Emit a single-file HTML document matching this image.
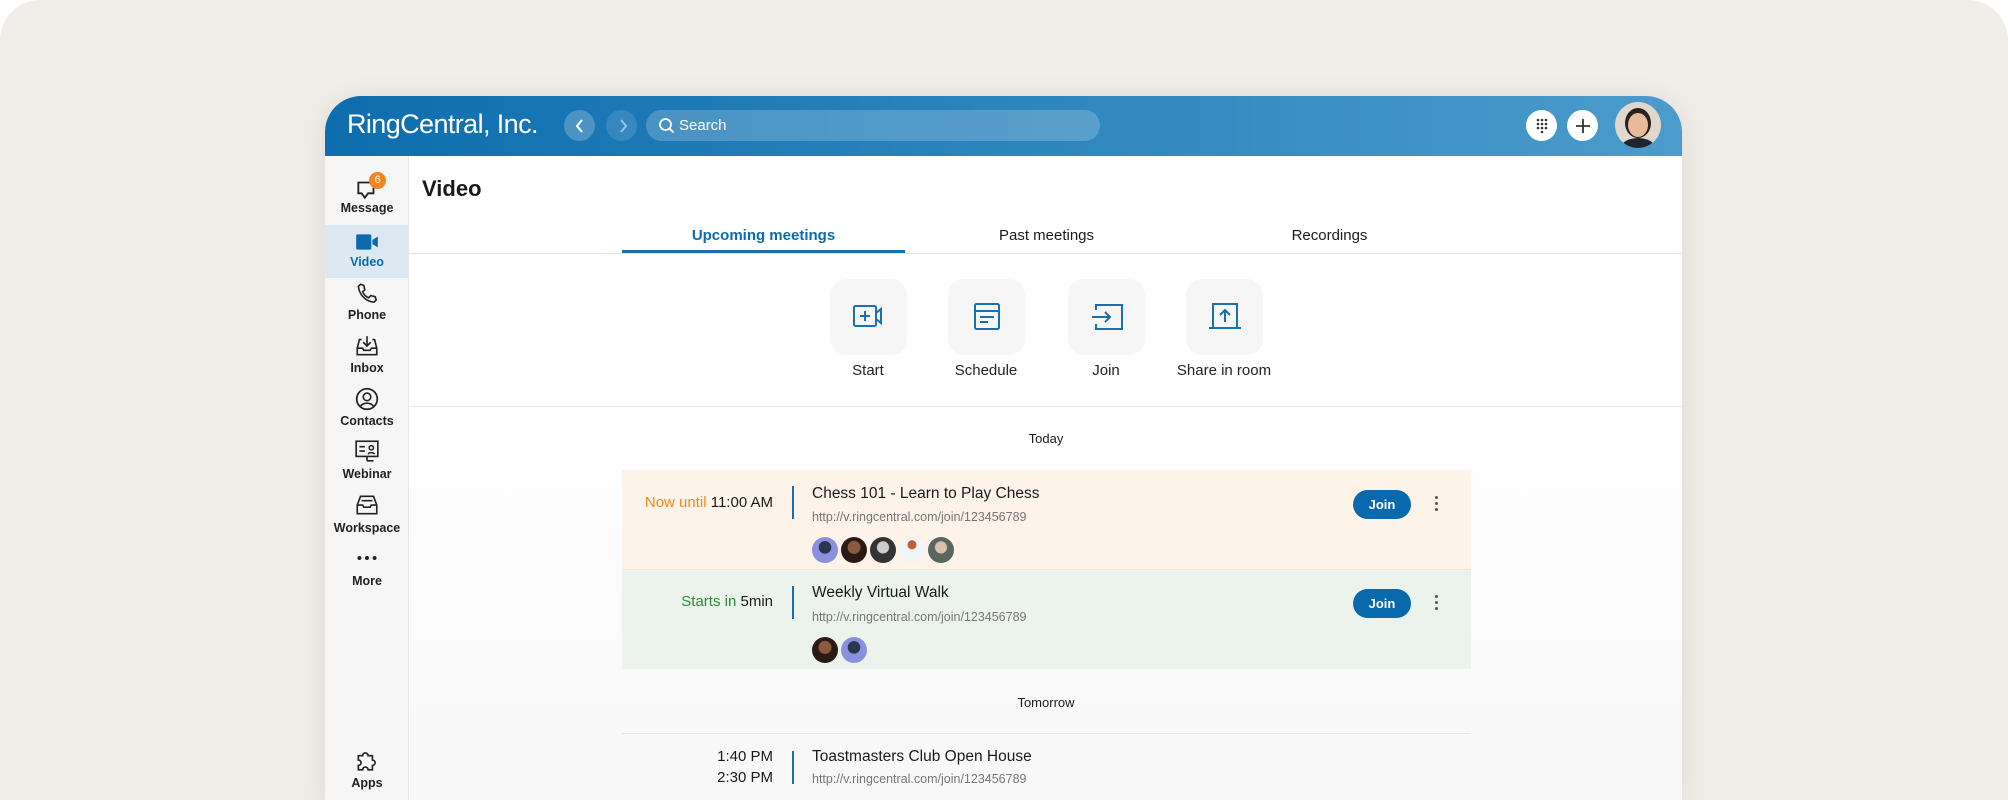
<!DOCTYPE html>
<html><head><meta charset="utf-8"><style>
*{box-sizing:border-box;margin:0;padding:0}
html,body{width:2008px;height:800px;overflow:hidden}
body{background:#fff;font-family:"Liberation Sans",sans-serif;color:#1a1a1a;position:relative}
.bg{position:absolute;left:0;top:0;width:2008px;height:800px;background:#f0ede8;border-radius:40px 40px 0 0}
.win{position:absolute;left:325px;top:96px;width:1357px;height:704px;border-radius:36px 36px 0 0;overflow:hidden;background:#fff;box-shadow:0 4px 30px rgba(0,0,0,.08)}
.hdr{position:absolute;left:0;top:0;width:100%;height:60px;background:linear-gradient(90deg,#0d6dae,#4b9ccc)}
.t{position:absolute;white-space:nowrap}
.circ{position:absolute;border-radius:50%}
.side{position:absolute;left:0;top:60px;width:84px;height:700px;background:#f6f6f6;border-right:1px solid #e6e6e6}
.lab{position:absolute;left:0;width:84px;text-align:center;font-size:12.5px;font-weight:bold;color:#222}
.ic{position:absolute;left:29px;width:26px;height:26px}
.abtn{position:absolute;top:183px;width:77px;height:76px;background:#f6f6f6;border-radius:16px}
.alab{position:absolute;top:266px;width:160px;text-align:center;font-size:15px;color:#222}
.av{position:absolute;width:26px;height:26px;border-radius:50%}
.join{position:absolute;left:1028px;width:58px;height:29px;border-radius:15px;background:#0a68ad;color:#fff;font-size:13px;font-weight:bold;text-align:center;line-height:29px}
.keb{position:absolute;left:1110px;width:4px;font-size:0}
.keb i{display:block;width:3px;height:3px;border-radius:50%;background:#555;margin-bottom:3px}
.bar{position:absolute;left:467px;width:2px;background:#1a6fb0}
.time{position:absolute;right:909px;font-size:15px;text-align:right;white-space:nowrap}
.ttl{position:absolute;left:487px;font-size:15.5px;white-space:nowrap}
.url{position:absolute;left:487px;font-size:12.5px;color:#777;white-space:nowrap}
</style></head><body>
<div class="bg"></div>
<div class="win">
 <div class="hdr">
  <div class="t" style="left:22px;top:13px;font-size:27px;color:#fff;letter-spacing:-0.6px">RingCentral, Inc.</div>
  <div class="circ" style="left:239px;top:14px;width:31px;height:31px;background:rgba(255,255,255,.22)"></div>
  <svg class="t" style="left:249px;top:22px" width="12" height="16"><path d="M8 2L3 8l5 6" stroke="#fff" stroke-width="2" fill="none"/></svg>
  <div class="circ" style="left:281px;top:14px;width:31px;height:31px;background:rgba(255,255,255,.12)"></div>
  <svg class="t" style="left:292px;top:22px" width="12" height="16"><path d="M4 2l5 6-5 6" stroke="rgba(255,255,255,.5)" stroke-width="2" fill="none"/></svg>
  <div class="t" style="left:321px;top:14px;width:454px;height:31px;border-radius:16px;background:rgba(255,255,255,.2)"></div>
  <svg class="t" style="left:333px;top:21px" width="18" height="18"><circle cx="7.5" cy="7.5" r="5.5" stroke="#fff" stroke-width="1.8" fill="none"/><path d="M11.5 11.5l4 4" stroke="#fff" stroke-width="1.8"/></svg>
  <div class="t" style="left:354px;top:21px;font-size:15px;color:#fff">Search</div>
  <div class="circ" style="left:1201px;top:14px;width:31px;height:31px;background:#fff"></div>
  <svg class="t" style="left:1209px;top:21px" width="16" height="18"><g fill="#333"><circle cx="4" cy="3" r="1.3"/><circle cx="8" cy="3" r="1.3"/><circle cx="12" cy="3" r="1.3"/><circle cx="4" cy="7" r="1.3"/><circle cx="8" cy="7" r="1.3"/><circle cx="12" cy="7" r="1.3"/><circle cx="4" cy="11" r="1.3"/><circle cx="8" cy="11" r="1.3"/><circle cx="12" cy="11" r="1.3"/><circle cx="8" cy="15" r="1.3"/></g></svg>
  <div class="circ" style="left:1242px;top:14px;width:31px;height:31px;background:#fff"></div>
  <svg class="t" style="left:1249px;top:21px" width="18" height="18"><path d="M9 2v14M2 9h14" stroke="#333" stroke-width="1.8"/></svg>
  <div class="circ" style="left:1290px;top:6px;width:46px;height:46px;background:#e0d8cc;overflow:hidden">
   <div class="circ" style="left:10px;top:6px;width:26px;height:30px;background:#2a211c"></div>
   <div class="circ" style="left:13px;top:11px;width:20px;height:24px;background:#e8b99a"></div>
   <div style="position:absolute;left:6px;top:36px;width:34px;height:20px;border-radius:50%;background:#1e2430"></div>
  </div>
 </div>
 <div class="side">
  <svg class="ic" style="top:20px" viewBox="0 0 24 24"><path d="M4 6h14v10h-5l-3 4-3-4H4z" fill="none" stroke="#222" stroke-width="1.7"/></svg>
  <div class="circ" style="left:44px;top:16px;width:17px;height:17px;background:#f4841f;color:#fff;font-size:11px;text-align:center;line-height:17px">6</div>
  <div class="lab" style="top:45px">Message</div>
  <div style="position:absolute;left:0;top:69px;width:83px;height:53px;background:#dce9f2"></div>
  <svg class="ic" style="top:73px" viewBox="0 0 24 24"><rect x="2" y="5" width="14" height="14" rx="1.5" fill="#0d6aad"/><path d="M17 10l5-3v10l-5-3z" fill="#0d6aad"/></svg>
  <div class="lab" style="top:99px;color:#0d6aad">Video</div>
  <svg class="ic" style="top:125px" viewBox="0 0 24 24"><path d="M6 3l3 1 1 4-2 2c1 2.5 3 4.5 5.5 5.5l2-2 4 1 1 3-2 2C11 19 5 13 4 5z" fill="none" stroke="#222" stroke-width="1.5"/></svg>
  <div class="lab" style="top:152px">Phone</div>
  <svg class="ic" style="top:177px" viewBox="0 0 24 24"><path d="M12 3v9m-3.5-3.5L12 12l3.5-3.5M7 6H5l-2 8v6h18v-6l-2-8h-2M3 14h5l1 2h6l1-2h5" fill="none" stroke="#222" stroke-width="1.5"/></svg>
  <div class="lab" style="top:205px">Inbox</div>
  <svg class="ic" style="top:230px" viewBox="0 0 24 24"><circle cx="12" cy="12" r="9.5" fill="none" stroke="#222" stroke-width="1.6"/><circle cx="12" cy="10" r="3.5" fill="none" stroke="#222" stroke-width="1.5"/><path d="M6 18.5c3-3.5 9-3.5 12 0" fill="none" stroke="#222" stroke-width="1.5"/></svg>
  <div class="lab" style="top:258px">Contacts</div>
  <svg class="ic" style="top:282px" viewBox="0 0 24 24"><rect x="2" y="3" width="20" height="14" fill="none" stroke="#222" stroke-width="1.5"/><path d="M5 8h5M5 12h5M12 21h6M12 17v4" stroke="#222" stroke-width="1.5"/><circle cx="16" cy="9" r="2" fill="none" stroke="#222" stroke-width="1.4"/><path d="M13 15c1-2 5-2 6 0" fill="none" stroke="#222" stroke-width="1.4"/></svg>
  <div class="lab" style="top:311px">Webinar</div>
  <svg class="ic" style="top:336px" viewBox="0 0 24 24"><path d="M6 4h12l3 8v8H3v-8zM3 12h5l1 2h6l1-2h5M7 8h10" fill="none" stroke="#222" stroke-width="1.5"/></svg>
  <div class="lab" style="top:365px">Workspace</div>
  <svg class="ic" style="top:389px" viewBox="0 0 24 24"><circle cx="5" cy="12" r="1.8" fill="#222"/><circle cx="12" cy="12" r="1.8" fill="#222"/><circle cx="19" cy="12" r="1.8" fill="#222"/></svg>
  <div class="lab" style="top:418px">More</div>
  <svg class="ic" style="top:591px" viewBox="0 0 24 24"><path d="M4 8h4a2.5 2.5 0 015 0h4v4a2.5 2.5 0 010 5v4h-4a2.5 2.5 0 00-5 0H4v-4a2.5 2.5 0 000-5z" fill="none" stroke="#222" stroke-width="1.5"/></svg>
  <div class="lab" style="top:620px">Apps</div>
 </div>
 <div style="position:absolute;left:85px;top:311px;width:1272px;height:420px;background:linear-gradient(#fff,#f7f7f7)"></div>
 <div class="t" style="left:97px;top:80px;font-size:22px;font-weight:bold">Video</div>
 <div style="position:absolute;left:85px;top:157px;width:1272px;height:1px;background:#e4e4e4"></div>
 <div style="position:absolute;left:297px;top:154px;width:283px;height:3px;background:#1a6fb0"></div>
 <div class="t" style="left:297px;top:131px;width:283px;text-align:center;font-size:15px;color:#0d6aad;font-weight:bold">Upcoming meetings</div>
 <div class="t" style="left:580px;top:131px;width:283px;text-align:center;font-size:15px">Past meetings</div>
 <div class="t" style="left:863px;top:131px;width:283px;text-align:center;font-size:15px">Recordings</div>
 <div class="abtn" style="left:505px"></div><div class="abtn" style="left:623px"></div><div class="abtn" style="left:743px"></div><div class="abtn" style="left:861px"></div>
 <svg class="t" style="left:527px;top:205px" width="34" height="32" viewBox="0 0 34 32"><rect x="2" y="5" width="22" height="20" rx="1.5" fill="none" stroke="#1a6fb0" stroke-width="2"/><path d="M13 10v10M8 15h10M24 12l5-4v14l-5-4" fill="none" stroke="#1a6fb0" stroke-width="2"/></svg>
 <svg class="t" style="left:645px;top:204px" width="34" height="34" viewBox="0 0 34 34"><rect x="5" y="4" width="24" height="25" rx="1.5" fill="none" stroke="#1a6fb0" stroke-width="2"/><path d="M5 11h24M10 17h14M10 22h8" stroke="#1a6fb0" stroke-width="2"/></svg>
 <svg class="t" style="left:765px;top:204px" width="36" height="34" viewBox="0 0 36 34"><path d="M6 10V5h26v24H6v-5M2 17h18m-5-5l5 5-5 5" fill="none" stroke="#1a6fb0" stroke-width="2"/></svg>
 <svg class="t" style="left:882px;top:204px" width="36" height="34" viewBox="0 0 36 34"><path d="M6 27V4h24v23M2 28h32M18 22V10m-5 5l5-5 5 5" fill="none" stroke="#1a6fb0" stroke-width="2"/></svg>
 <div class="alab" style="left:463px">Start</div><div class="alab" style="left:581px">Schedule</div><div class="alab" style="left:701px">Join</div><div class="alab" style="left:819px">Share in room</div>
 <div style="position:absolute;left:85px;top:310px;width:1272px;height:1px;background:#e6e6e6"></div>
 <div class="t" style="left:621px;top:335px;width:200px;text-align:center;font-size:13px">Today</div>
 <div style="position:absolute;left:297px;top:374px;width:849px;height:100px;background:#fdf3e9;border-bottom:1px solid #f8e4d0"></div>
 <div style="position:absolute;left:297px;top:474px;width:849px;height:99px;background:#ecf3ec"></div>
 <div class="time" style="top:398px"><span style="color:#f08a1c">Now until </span>11:00 AM</div>
 <div class="bar" style="top:390px;height:33px"></div>
 <div class="ttl" style="top:389px">Chess 101 - Learn to Play Chess</div>
 <div class="url" style="top:414px">http://v.ringcentral.com/join/123456789</div>
 <div class="av" style="left:487px;top:441px;background:radial-gradient(circle at 50% 40%,#2c3550 30%,#8b8fe0 32%)"></div>
 <div class="av" style="left:516px;top:441px;background:radial-gradient(circle at 50% 40%,#8a5a40 30%,#2a1a14 34%)"></div>
 <div class="av" style="left:545px;top:441px;background:radial-gradient(circle at 50% 40%,#ccc 28%,#333 32%)"></div>
 <div class="av" style="left:574px;top:441px;background:radial-gradient(circle at 50% 30%,#c0603a 18%,#f0f4f4 22%)"></div>
 <div class="av" style="left:603px;top:441px;background:radial-gradient(circle at 50% 40%,#d8c0aa 28%,#5a6660 32%)"></div>
 <div class="join" style="top:394px">Join</div>
 <div class="keb" style="top:400px"><i></i><i></i><i></i></div>
 <div class="time" style="top:497px"><span style="color:#2e8b3a">Starts in </span>5min</div>
 <div class="bar" style="top:490px;height:33px"></div>
 <div class="ttl" style="top:488px">Weekly Virtual Walk</div>
 <div class="url" style="top:514px">http://v.ringcentral.com/join/123456789</div>
 <div class="av" style="left:487px;top:541px;background:radial-gradient(circle at 50% 40%,#8a5a40 30%,#2a1a14 34%)"></div>
 <div class="av" style="left:516px;top:541px;background:radial-gradient(circle at 50% 40%,#2c3550 30%,#8b8fe0 32%)"></div>
 <div class="join" style="top:493px">Join</div>
 <div class="keb" style="top:499px"><i></i><i></i><i></i></div>
 <div class="t" style="left:621px;top:599px;width:200px;text-align:center;font-size:13px">Tomorrow</div>
 <div style="position:absolute;left:297px;top:637px;width:849px;height:1px;background:#e6e6e6"></div>
 <div class="time" style="top:652px">1:40 PM</div>
 <div class="time" style="top:673px">2:30 PM</div>
 <div class="bar" style="top:655px;height:33px"></div>
 <div class="ttl" style="top:652px">Toastmasters Club Open House</div>
 <div class="url" style="top:676px">http://v.ringcentral.com/join/123456789</div>
</div>
</body></html>
